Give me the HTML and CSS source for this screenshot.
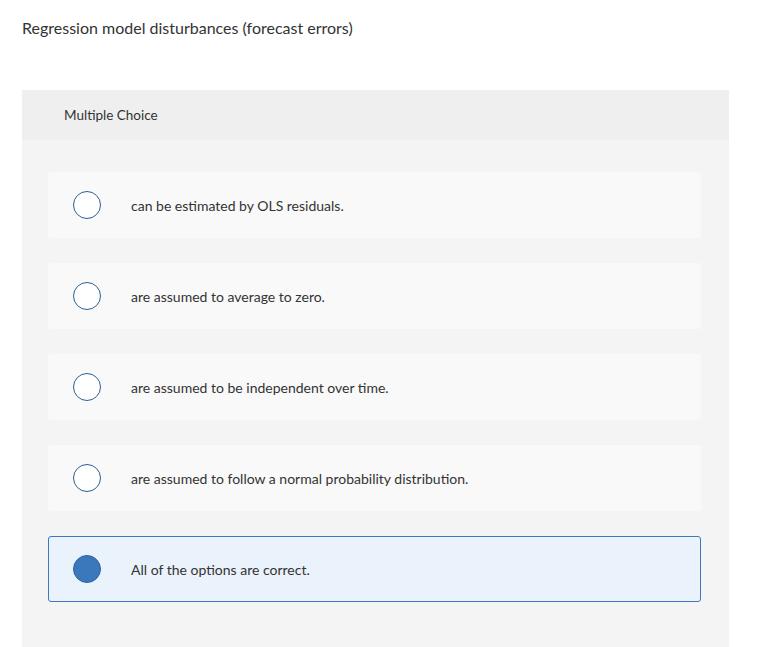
FILE: index.html
```html
<!DOCTYPE html>
<html>
<head>
<meta charset="utf-8">
<link rel="stylesheet" href="styles.css">
</head>
<body>
<p class="prompt">Regression model disturbances (forecast errors)</p>
<section class="panel">
  <header class="panel-head">Multiple Choice</header>
  <div class="panel-body">
    <div class="option"><span class="radio"></span><span class="label">can be estimated by OLS residuals.</span></div>
    <div class="option"><span class="radio"></span><span class="label">are assumed to average to zero.</span></div>
    <div class="option"><span class="radio"></span><span class="label">are assumed to be independent over time.</span></div>
    <div class="option"><span class="radio"></span><span class="label">are assumed to follow a normal probability distribution.</span></div>
    <div class="option selected"><span class="radio"></span><span class="label">All of the options are correct.</span></div>
  </div>
</section>
</body>
</html>
```
FILE: styles.css
```css
html, body { margin: 0; padding: 0; background: #fff; }
body {
  font-family: "Lato", "Liberation Sans", sans-serif;
  color: #333;
  padding: 0 42px 0 22px;
}
.prompt {
  margin: 0;
  padding-top: 18px;
  font-size: 16px;
  line-height: 20px;
  color: #333;
}
.panel {
  margin-top: 52px;
  background: #f4f4f4;
}
.panel-head {
  height: 50px;
  display: flex;
  align-items: center;
  padding-left: 42px;
  background: #efefef;
  font-size: 13.5px;
  color: #333;
}
.panel-body {
  padding: 32px 28px 46px 26px;
  display: flex;
  flex-direction: column;
  gap: 25px;
}
.option {
  height: 66px;
  box-sizing: border-box;
  display: flex;
  align-items: center;
  background: #f9f9f9;
  border: 1px solid transparent;
  border-radius: 3px;
  padding-left: 24px;
}
.radio {
  width: 28px;
  height: 28px;
  box-sizing: border-box;
  border-radius: 50%;
  border: 1.5px solid #2b5e93;
  background: #fff;
  flex: none;
}
.label {
  margin-left: 30px;
  font-size: 14px;
  color: #333;
}
.option.selected {
  background: #eaf2fb;
  border-color: #3b78c0;
}
.option.selected .radio {
  background: #3a77bb;
  border-color: #2e65a3;
}
```
